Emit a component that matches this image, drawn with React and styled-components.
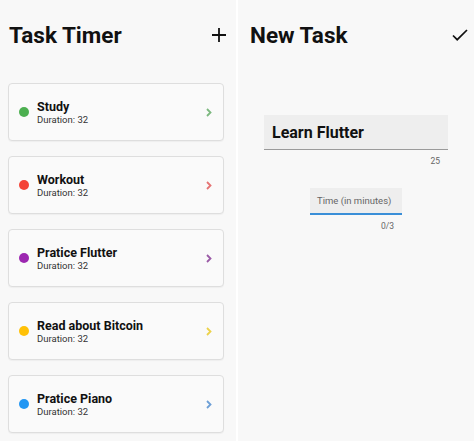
import React from 'react'
import styled, { createGlobalStyle } from 'styled-components'

const GlobalStyle = createGlobalStyle`
  html, body {
    margin: 0;
    padding: 0;
    background: #ffffff;
    font-family: Roboto, "Liberation Sans", sans-serif;
  }
`

const tasks = [
  { name: 'Study', duration: 32, color: '#4caf50', soft: '#7cb87f' },
  { name: 'Workout', duration: 32, color: '#f44336', soft: '#e57373' },
  { name: 'Pratice Flutter', duration: 32, color: '#9c27b0', soft: '#9a5aa6' },
  { name: 'Read about Bitcoin', duration: 32, color: '#ffc107', soft: '#ecd24a' },
  { name: 'Pratice Piano', duration: 32, color: '#2196f3', soft: '#6d9fd6' },
]

function App() {
  return (
    <>
      <GlobalStyle />
      <Screen>
        <Panel>
          <Header right={7}>
            <Title>Task Timer</Title>
            <IconButton>
              <svg width="16" height="16" viewBox="0 0 16 16">
                <path d="M8 1v14M1 8h14" stroke="#111" strokeWidth="1.8" fill="none" />
              </svg>
            </IconButton>
          </Header>
          <List>
            {tasks.map(t => (
              <Card key={t.name}>
                <Dot color={t.color} />
                <Info>
                  <TaskName>{t.name}</TaskName>
                  <Duration>Duration: {t.duration}</Duration>
                </Info>
                <svg width="6" height="9" viewBox="0 0 6 9">
                  <path d="M1 1l3.5 3.5L1 8" stroke={t.soft} strokeWidth="1.8" fill="none" />
                </svg>
              </Card>
            ))}
          </List>
        </Panel>
        <Divider />
        <Panel>
          <Header left={12} right={4}>
            <Title>New Task</Title>
            <IconButton>
              <svg width="16" height="12" viewBox="0 0 16 12">
                <path d="M1 6.5l4.2 4.2L15 1" stroke="#111" strokeWidth="1.7" fill="none" />
              </svg>
            </IconButton>
          </Header>
          <Form>
            <Field width={184}>
              <NameBox>Learn Flutter</NameBox>
              <Counter>25</Counter>
            </Field>
            <Field width={92}>
              <TimeBox>Time (in minutes)</TimeBox>
              <Counter>0/3</Counter>
            </Field>
          </Form>
        </Panel>
      </Screen>
    </>
  )
}

export default App

const Screen = styled.div`
  display: flex;
  width: 474px;
  height: 441px;
  overflow: hidden;
`

const Panel = styled.div`
  flex: 0 0 236px;
  background: #f8f8f8;
  display: flex;
  flex-direction: column;
`

const Divider = styled.div`
  flex: 0 0 2px;
  background: #ffffff;
`

const Header = styled.div`
  height: 70px;
  display: flex;
  align-items: center;
  justify-content: space-between;
  padding: 0 ${p => p.right ?? 8}px 0 ${p => p.left ?? 9}px;
`

const Title = styled.h1`
  margin: 0;
  font-size: 22.5px;
  font-weight: 700;
  color: #111;
`

const IconButton = styled.div`
  display: flex;
  align-items: center;
  justify-content: center;
  width: 20px;
  height: 20px;
`

const List = styled.div`
  display: flex;
  flex-direction: column;
  gap: 15px;
  margin-top: 13px;
  padding: 0 12px 0 8px;
`

const Card = styled.div`
  height: 58px;
  box-sizing: border-box;
  display: flex;
  align-items: center;
  padding: 0 11px 0 10px;
  background: #fafafa;
  border: 1px solid #dedede;
  border-radius: 4px;
  box-shadow: 0 1px 1px rgba(0, 0, 0, 0.04);
`

const Dot = styled.span`
  width: 10px;
  height: 10px;
  border-radius: 50%;
  background: ${p => p.color};
  flex: 0 0 auto;
`

const Info = styled.div`
  flex: 1;
  display: flex;
  flex-direction: column;
  margin-left: 8px;
`

const TaskName = styled.div`
  font-size: 12.5px;
  font-weight: 700;
  color: #111;
  line-height: 15px;
`

const Duration = styled.div`
  font-size: 9.5px;
  color: #333;
  line-height: 11px;
`

const Form = styled.div`
  display: flex;
  flex-direction: column;
  align-items: center;
  margin-top: 45px;
  gap: 22px;
`

const Field = styled.div`
  width: ${p => p.width}px;
  display: flex;
  flex-direction: column;
`

const NameBox = styled.div`
  height: 35px;
  box-sizing: border-box;
  background: #eeeeee;
  border-bottom: 1px solid #9a9a9a;
  padding: 0 8px;
  display: flex;
  align-items: center;
  font-size: 16px;
  font-weight: 700;
  color: #111;
`

const TimeBox = styled.div`
  height: 27px;
  box-sizing: border-box;
  background: #eeeeee;
  border-bottom: 2px solid #3a8fd8;
  padding: 0 7px;
  display: flex;
  align-items: center;
  font-size: 9.5px;
  color: #666;
  white-space: nowrap;
`

const Counter = styled.div`
  text-align: right;
  font-size: 8.5px;
  color: #666;
  padding: 6px 8px 0 0;
`
